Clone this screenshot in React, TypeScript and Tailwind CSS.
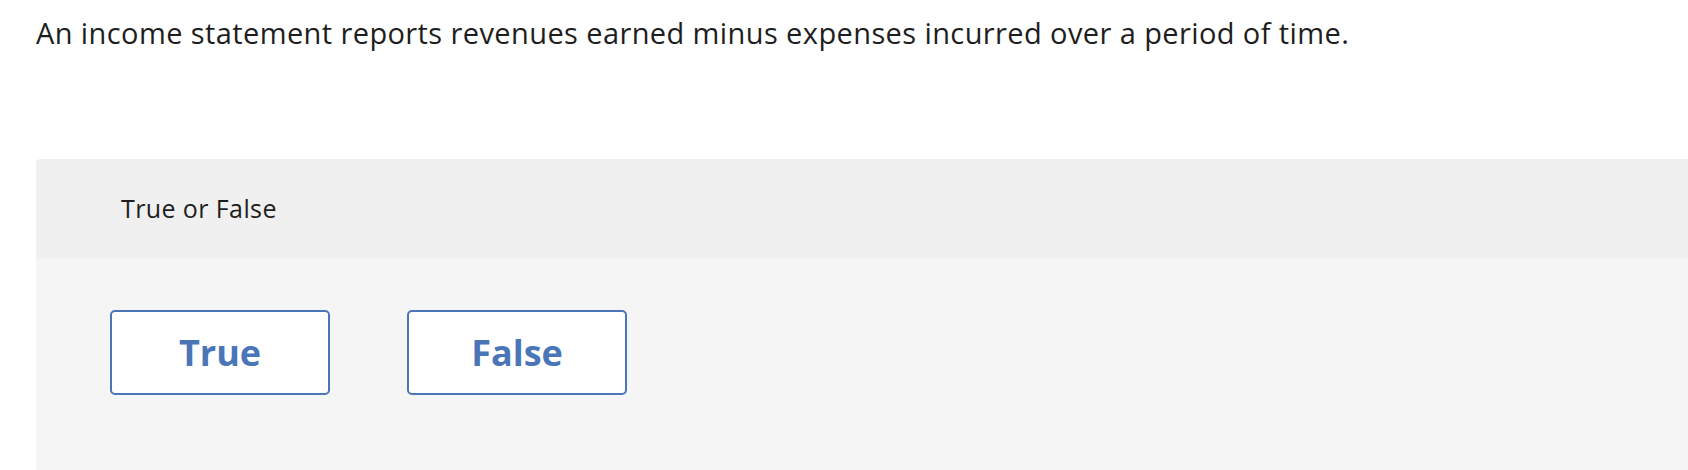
import React from 'react';

export default function App() {
    const options = ['True', 'False'];

    return (
        <div className="w-[1688px] h-[470px] bg-white overflow-hidden font-['Open_Sans',sans-serif] text-[#1e1e1e]">
            {/* Question prompt */}
            <div className="pl-[36px] pt-[14px] h-[159px]">
                <p className="text-[29px] leading-[38px] tracking-[0.4px]">
                    An income statement reports revenues earned minus expenses incurred over a period of time.
                </p>
            </div>

            {/* Answer card */}
            <div className="ml-[36px] rounded-tl-[4px] overflow-hidden">
                <div className="h-[100px] bg-[#f0f0f0] flex items-center pl-[85px]">
                    <span className="text-[25px] tracking-[0.4px]">True or False</span>
                </div>
                <div className="h-[211px] bg-[#f5f5f5] pl-[74px] pt-[51px] flex gap-[77px]">
                    {options.map((opt) => (
                        <button
                            key={opt}
                            className="w-[220px] h-[85px] bg-white border-2 border-[#4a76b8] rounded-[5px] text-[#4a76b8] text-[36px] font-bold flex items-center justify-center"
                        >
                            {opt}
                        </button>
                    ))}
                </div>
            </div>
        </div>
    );
}
